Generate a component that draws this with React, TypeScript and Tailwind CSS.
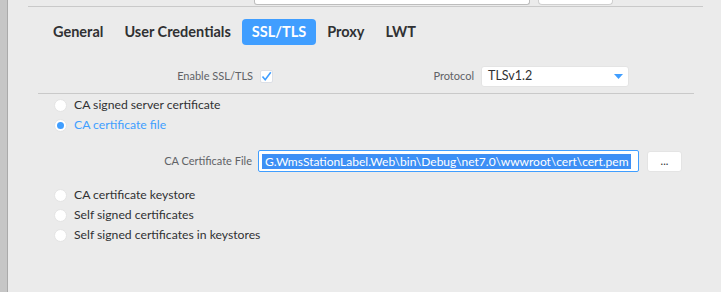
import React from "react";

const font = { fontFamily: "Lato, 'Open Sans', sans-serif" };

function Radio({ checked, label }: { checked?: boolean; label: string }) {
  return (
    <div className="flex items-center h-[20px] ml-[46px]">
      <div className="w-[13px] h-[13px] rounded-full bg-white border border-[#e4e4e4] flex items-center justify-center">
        {checked && <div className="w-[7px] h-[7px] rounded-full bg-[#409eff]" />}
      </div>
      <span className={`ml-[7px] text-[12.2px] ${checked ? "text-[#409eff]" : "text-[#303133]"}`}>{label}</span>
    </div>
  );
}

export default function App() {
  const tabs = ["General", "User Credentials", "SSL/TLS", "Proxy", "LWT"];
  return (
    <div className="w-[721px] h-[292px] flex bg-[#ebebeb] overflow-hidden" style={font}>
      <div className="w-[8px] h-full bg-[#c6c6c6] border-r border-[#aaaaaa]" />
      <div className="flex-1 flex flex-col">
        <div className="flex h-[5px]">
          <div className="ml-[246px] w-[276px] h-[5px] bg-white border-x border-b border-[#bdbdbd] rounded-b-[3px]" />
          <div className="ml-[8px] w-[75px] h-[5px] bg-white border-x border-b border-[#cfcfcf] rounded-b-[4px]" />
        </div>
        <div className="mt-px ml-[20px] w-[675px] h-px bg-[#c9c9c9]" />
        <div className="flex mt-[12px] ml-[35px] h-[26px] items-center">
          {tabs.map((t) => (
            <div
              key={t}
              className={`h-[26px] px-[10px] mr-px flex items-center rounded-[4px] text-[14.5px] font-bold ${
                t === "SSL/TLS" ? "bg-[#409eff] text-white" : "text-[#303133]"
              }`}
            >
              {t}
            </div>
          ))}
        </div>
        <div className="flex items-center mt-[21px] h-[21px]">
          <div className="w-[245px] text-right text-[11px] text-[#606266]">Enable SSL/TLS</div>
          <div className="ml-[7px] w-[13px] h-[13px] bg-white border border-[#dcdfe6] rounded-[2px] flex items-center justify-center">
            <svg width="11" height="11" viewBox="0 0 11 11">
              <path d="M1.5 5.5 L4.2 8.8 L9.8 1.2" fill="none" stroke="#409eff" strokeWidth="1.6" />
            </svg>
          </div>
          <div className="w-[201px] text-right text-[11px] text-[#606266]">Protocol</div>
          <div className="ml-[7px] w-[148px] h-[21px] bg-white rounded-[3px] border border-[#e4e4e4] flex items-center justify-between pl-[6px] pr-[5px]">
            <span className="text-[12.5px] text-[#303133]">TLSv1.2</span>
            <svg width="9" height="5" viewBox="0 0 9 5">
              <path d="M0 0 L9 0 L4.5 5 Z" fill="#409eff" />
            </svg>
          </div>
        </div>
        <div className="mt-[6px] ml-[30px] w-[656px] h-px bg-[#c9c9c9]" />
        <div className="mt-px flex flex-col">
          <Radio label="CA signed server certificate" />
          <Radio checked label="CA certificate file" />
        </div>
        <div className="flex items-center mt-[15px] h-[22px]">
          <div className="w-[244px] text-right text-[11px] text-[#606266]">CA Certificate File</div>
          <div className="ml-[6px] w-[381px] h-[22px] bg-white border border-[#409eff] rounded-[2px] flex items-center pl-[3px] pr-[4px] overflow-hidden">
            <div className="flex-1 overflow-hidden flex">
              <span className="bg-[#3d8ff5] text-white text-[12px] leading-[15px] whitespace-nowrap pl-[3px] pr-[2px]">
                G.WmsStationLabel.Web\bin\Debug\net7.0\wwwroot\cert\cert.pem
              </span>
            </div>
          </div>
          <div className="ml-[8px] w-[35px] h-[21px] bg-white rounded-[3px] border border-[#e4e4e4] flex items-center justify-center text-[11px] text-[#303133] leading-none pb-[2px]">
            ...
          </div>
        </div>
        <div className="mt-[13px] flex flex-col">
          <Radio label="CA certificate keystore" />
          <Radio label="Self signed certificates" />
          <Radio label="Self signed certificates in keystores" />
        </div>
      </div>
    </div>
  );
}
